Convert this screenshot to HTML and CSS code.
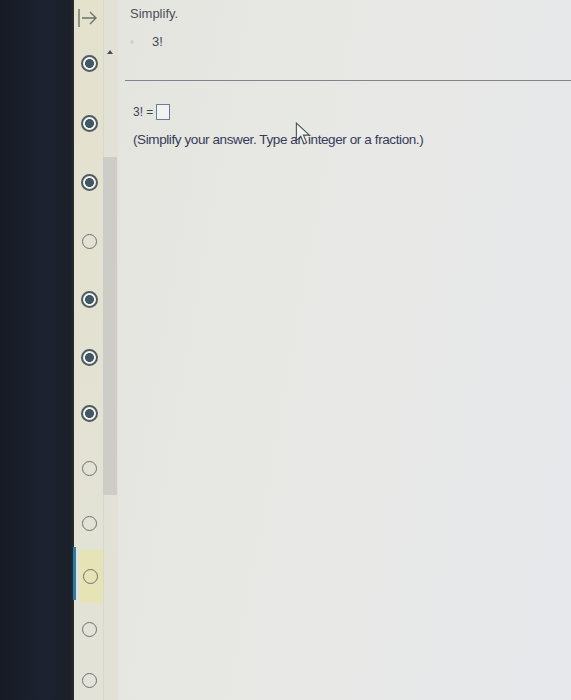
FILE: index.html
```html
<!DOCTYPE html>
<html>
<head>
<meta charset="utf-8">
<link rel="stylesheet" href="styles.css">
</head>
<body>
<div class="screen">
  <div class="bezel"></div>
  <aside class="sidebar">
    <div class="nav-col">
      <div class="nav-top">
        <svg class="expand-icon" width="22" height="22" viewBox="0 0 22 22">
          <path d="M2 2 V20 M5 11 H19 M13 5 L19 11 L13 17" fill="none" stroke="#6f716e" stroke-width="1.4"/>
        </svg>
      </div>
      <ul class="questions">
        <li class="q"><span class="radio done"></span></li>
        <li class="q"><span class="radio done"></span></li>
        <li class="q"><span class="radio done"></span></li>
        <li class="q"><span class="radio"></span></li>
        <li class="q"><span class="radio done"></span></li>
        <li class="q"><span class="radio done"></span></li>
        <li class="q"><span class="radio done"></span></li>
        <li class="q"><span class="radio"></span></li>
        <li class="q"><span class="radio"></span></li>
        <li class="q current"><span class="radio"></span></li>
        <li class="q"><span class="radio"></span></li>
        <li class="q"><span class="radio"></span></li>
      </ul>
    </div>
    <div class="scroll-col">
      <div class="scroll-up"></div>
      <div class="scroll-thumb"></div>
    </div>
  </aside>
  <main class="content">
    <section class="question">
      <p class="prompt">Simplify.</p>
      <p class="expr"><span class="bullet"></span>3!</p>
    </section>
    <hr class="divider">
    <section class="answer">
      <p class="equation">3! = <span class="answer-box"></span></p>
      <div class="hint-wrap">
        <p class="hint">(Simplify your answer. Type an integer or a fraction.)</p>
        <svg class="cursor" width="18" height="24" viewBox="0 0 16 22">
          <path d="M1 1 L1 17 L5 13 L8 20 L10.5 19 L7.5 12 L13 12 Z" fill="#f2f2f0" stroke="#4a4f58" stroke-width="1"/>
        </svg>
      </div>
    </section>
  </main>
</div>
</body>
</html>
```
FILE: styles.css
```css
* { box-sizing: border-box; }
html, body {
  margin: 0;
  padding: 0;
  width: 571px;
  height: 700px;
  overflow: hidden;
}
body {
  font-family: "Liberation Sans", Arial, sans-serif;
  background: #e6e6e3;
}
.screen {
  display: flex;
  height: 700px;
}
.bezel {
  width: 74px;
  flex: none;
  background: linear-gradient(90deg, #161b24 0%, #1c2230 60%, #1b2029 95%, #2a2d30 100%);
}
.sidebar {
  width: 44px;
  flex: none;
  display: flex;
  background: linear-gradient(180deg, #e4e2cd 0%, #e3e2d2 50%, #e2e2d8 100%);
  border-right: 1px solid #c9c9bf;
}
.nav-col {
  width: 29px;
  flex: none;
}
.nav-top {
  height: 33px;
  padding: 7px 0 0 3px;
}
.expand-icon { display: block; }
.questions {
  list-style: none;
  margin: 0;
  padding: 0;
  display: grid;
  grid-template-rows: 60px 60px 59px 58px 59px 56px 56px 55px 54px 53px 52px 50px;
}
.q {
  display: flex;
  align-items: center;
  justify-content: center;
  padding-left: 1px;
}
.q.current {
  background: #e6e4b4;
  margin-left: 6px;
  padding-right: 6px;
  margin-right: -2px;
  position: relative;
}
.q.current::before {
  content: "";
  position: absolute;
  left: -7px;
  top: -3px;
  bottom: 3px;
  width: 3px;
  background: #2a7da5;
}
.radio {
  width: 15px;
  height: 15px;
  border-radius: 50%;
  border: 1.5px solid #6c7074;
  background: transparent;
}
.radio.done {
  width: 17px;
  height: 17px;
  border: 2px solid #505a62;
  background: radial-gradient(circle, #3f5863 0 4.2px, #f4f4f0 4.7px);
}
.scroll-col {
  width: 15px;
  flex: none;
  position: relative;
  background: #e2e1d6;
  border-left: 1px solid #d8d7cb;
}
.scroll-up {
  position: absolute;
  left: 3px;
  top: 50px;
  width: 0;
  height: 0;
  border-left: 3px solid transparent;
  border-right: 3px solid transparent;
  border-bottom: 4px solid #4c4f55;
}
.scroll-thumb {
  margin: 157px 0 0 -1px;
  width: 14px;
  height: 338px;
  background: #cdccc6;
}
.content {
  flex: 1;
  background: linear-gradient(100deg, #e5e5df 0%, #e8e8e6 50%, #e7e8ec 100%);
  padding-top: 1px;
}
.question {
  padding-left: 12px;
}
.prompt {
  margin: 5px 0 0 0;
  font-size: 13px;
  color: #4b4f58;
}
.expr {
  margin: 13px 0 0 0;
  font-size: 13px;
  color: #444850;
  display: flex;
  align-items: center;
}
.bullet {
  width: 4px;
  height: 4px;
  border-radius: 50%;
  background: #d4d4cf;
  margin: 0 18px 0 0;
}
.divider {
  margin: 31px 0 0 7px;
  border: 0;
  border-top: 1px solid #80848c;
  height: 0;
}
.answer {
  padding: 23px 0 0 15px;
}
.equation {
  margin: 0;
  font-size: 12px;
  color: #3f4350;
  display: flex;
  align-items: center;
}
.answer-box {
  display: inline-block;
  width: 14px;
  height: 16px;
  border: 1px solid #6c7d9a;
  background: #f2f2f0;
  margin-left: 3px;
}
.hint-wrap {
  position: relative;
  margin-top: 12px;
}
.hint {
  margin: 0;
  font-size: 13.5px;
  color: #353a58;
  letter-spacing: -0.4px;
}
.cursor {
  position: absolute;
  left: 162px;
  top: -10px;
}
```
